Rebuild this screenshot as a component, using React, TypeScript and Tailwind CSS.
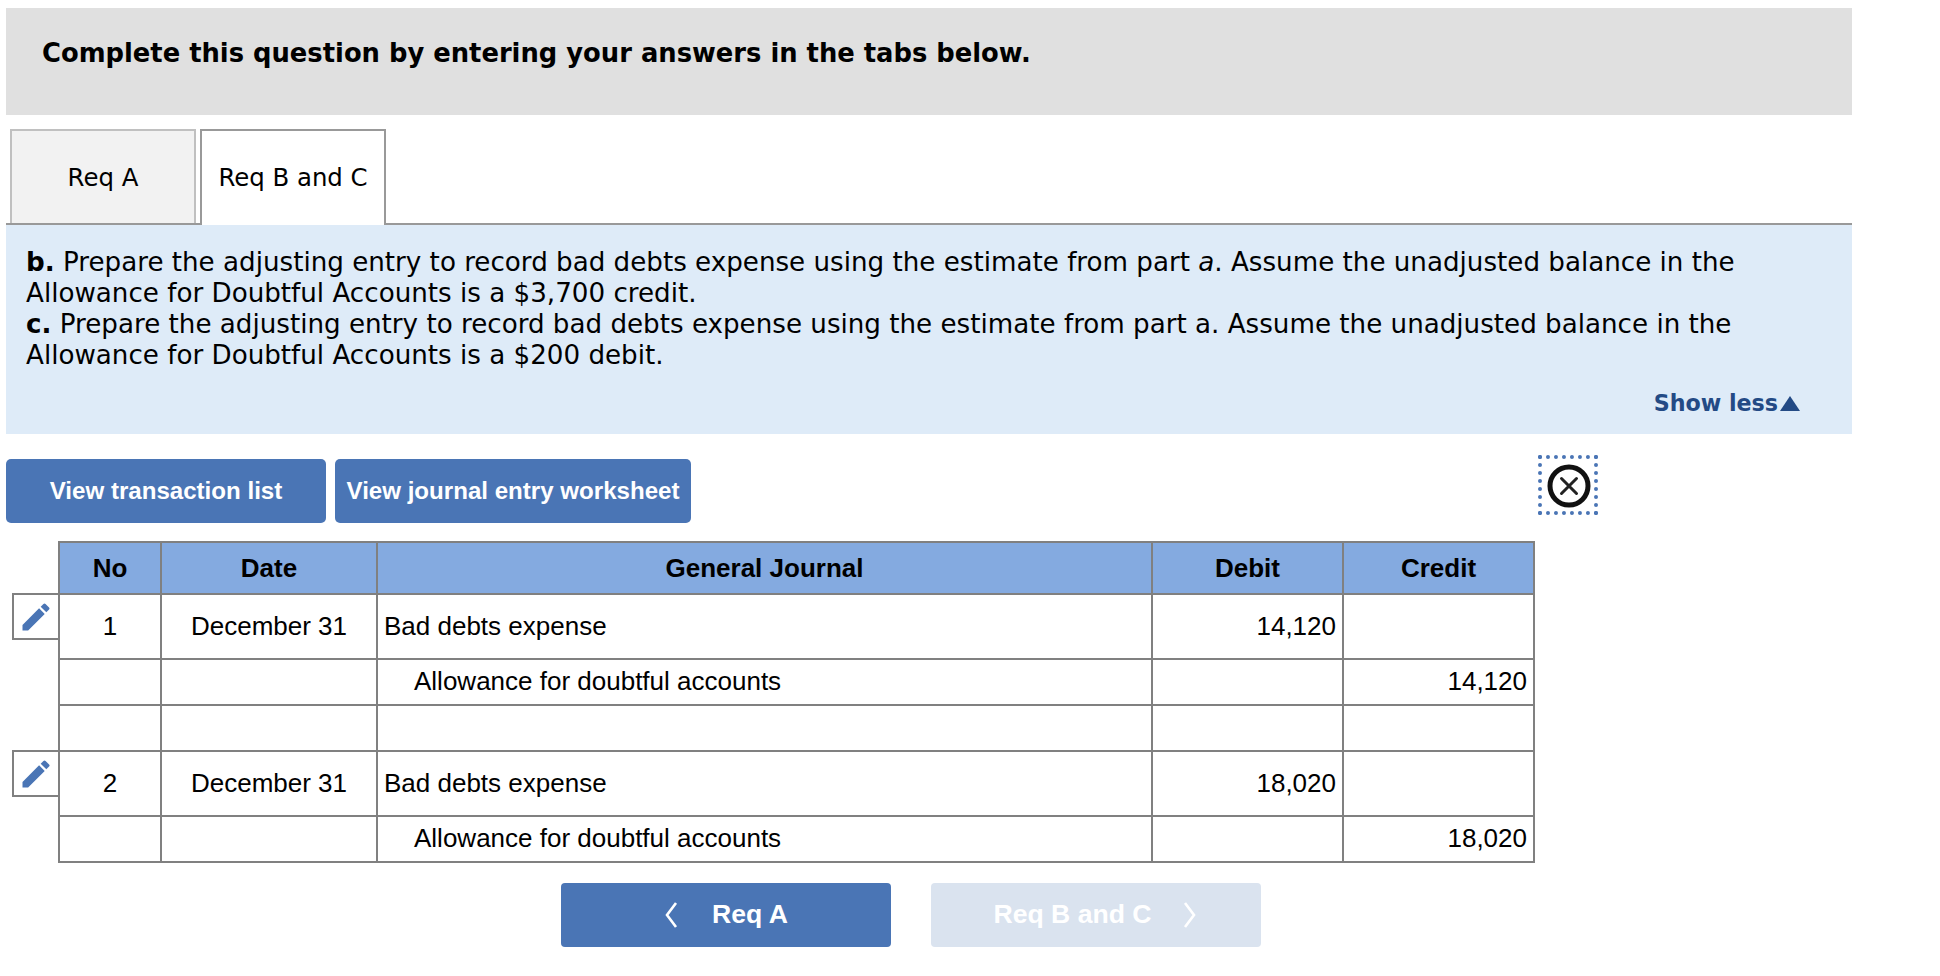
const verdana = "font-['DejaVu_Sans',sans-serif]";
const arial = "font-['Liberation_Sans',Arial,sans-serif]";

const gridCols = "grid grid-cols-[102px_216px_775px_191px_189px] w-[1477px]";

type Row = {
  no?: string;
  date?: string;
  account?: string;
  indent?: boolean;
  debit?: string;
  credit?: string;
  edit?: boolean;
  height: string;
};

const rows: Row[] = [
  { no: "1", date: "December 31", account: "Bad debts expense", debit: "14,120", edit: true, height: "h-[65px]" },
  { account: "Allowance for doubtful accounts", indent: true, credit: "14,120", height: "h-[46px]" },
  { height: "h-[46px]" },
  { no: "2", date: "December 31", account: "Bad debts expense", debit: "18,020", edit: true, height: "h-[65px]" },
  { account: "Allowance for doubtful accounts", indent: true, credit: "18,020", height: "h-[46px]" },
];

function PencilIcon() {
  return (
    <svg viewBox="0 0 24 24" className="h-[36px] w-[36px] fill-[#4a75b5]">
      <path d="M3 17.25V21h3.75L17.81 9.94l-3.75-3.75L3 17.25zM20.71 7.04a1 1 0 0 0 0-1.41l-2.34-2.34a1 1 0 0 0-1.41 0l-1.83 1.83 3.75 3.75 1.83-1.83z" />
    </svg>
  );
}

function CloseIcon() {
  return (
    <svg viewBox="0 0 44 44" className="h-[44px] w-[44px]">
      <circle cx="22" cy="22" r="19" fill="none" stroke="#111" strokeWidth="5" />
      <path d="M14.5 14.5l15 15M29.5 14.5l-15 15" stroke="#222" strokeWidth="3" strokeLinecap="round" />
    </svg>
  );
}

function JournalRow({ row }: { row: Row }) {
  return (
    <div className="flex">
      <div className="w-[58px] shrink-0">
        {row.edit && (
          <div className="ml-[12px] -mt-[2px] flex h-[47px] w-[46px] items-center justify-center border-2 border-r-0 border-[#808080] bg-white">
            <PencilIcon />
          </div>
        )}
      </div>
      <div className={`${gridCols} ${row.height} border-x-2 border-b-2 border-[#808080] text-[26px] text-black`}>
        <div className="flex items-center justify-center border-r-2 border-[#808080]">{row.no}</div>
        <div className="flex items-center justify-center border-r-2 border-[#808080]">{row.date}</div>
        <div className={`flex items-center border-r-2 border-[#808080] ${row.indent ? "pb-[2px] pl-[36px]" : "pl-[6px]"}`}>{row.account}</div>
        <div className={`flex items-center justify-end border-r-2 border-[#808080] pr-[6px] ${row.indent ? "pb-[2px]" : ""}`}>{row.debit}</div>
        <div className={`flex items-center justify-end pr-[6px] ${row.indent ? "pb-[2px]" : ""}`}>{row.credit}</div>
      </div>
    </div>
  );
}

export default function App() {
  return (
    <div className={`min-h-[976px] bg-white pt-[8px] text-black ${verdana}`}>
      <div className="ml-[6px] h-[107px] w-[1846px] bg-[#e0e0e0] pl-[36px] pt-[29px] text-[25.8px] leading-[32px] font-bold">
        Complete this question by entering your answers in the tabs below.
      </div>

      <div className="mt-[14px] ml-[6px] flex h-[96px] w-[1846px] items-end gap-[4px] border-b-2 border-[#999] pl-[4px]">
        <div className="flex h-[94px] w-[186px] items-center justify-center border-2 border-b-0 border-[#c0c0c0] bg-[#f2f2f2] pt-[3px] text-[24.4px]">
          Req A
        </div>
        <div className="-mb-[2px] flex h-[96px] w-[186px] items-center justify-center border-2 border-b-0 border-[#999] bg-white pb-[1px] pt-[2px] text-[24.4px]">
          Req B and C
        </div>
      </div>

      <div className="ml-[6px] h-[209px] w-[1846px] bg-[#deebf8] pt-[22px] pl-[20px] pr-[30px] text-[26.17px] leading-[31px]">
        <p><b>b.</b> Prepare the adjusting entry to record bad debts expense using the estimate from part <i>a</i>. Assume the unadjusted balance in the</p>
        <p>Allowance for Doubtful Accounts is a $3,700 credit.</p>
        <p><b>c.</b> Prepare the adjusting entry to record bad debts expense using the estimate from part a. Assume the unadjusted balance in the</p>
        <p>Allowance for Doubtful Accounts is a $200 debit.</p>
        <div className="mt-[17px] flex items-center justify-end gap-[2px] pr-[22px] text-[22.2px] leading-[30px] font-bold text-[#234a85]">
          Show less
          <span className="h-0 w-0 border-x-[10px] border-b-[15px] border-x-transparent border-b-[#234a85]" />
        </div>
      </div>

      <div className={`mt-[25px] ml-[6px] flex w-[1592px] items-start justify-between ${arial}`}>
        <div className="flex gap-[9px]">
          <button className="h-[64px] w-[320px] rounded-[5px] bg-[#4a75b5] text-[24.1px] font-bold text-white">View transaction list</button>
          <button className="h-[64px] w-[356px] rounded-[5px] bg-[#4a75b5] text-[24.1px] font-bold text-white">View journal entry worksheet</button>
        </div>
        <div className="-mt-[4px] mb-[4px] flex h-[60px] w-[60px] items-center justify-center border-4 border-dotted border-[#4a75b5] pt-[2px] pl-[1px]">
          <CloseIcon />
        </div>
      </div>

      <div className={`mt-[18px] ${arial}`}>
        <div className="ml-[58px]">
          <div className={`${gridCols} h-[54px] border-2 border-[#808080] bg-[#84aae0] text-[26px] font-bold`}>
            <div className="flex items-center justify-center border-r-2 border-[#808080]">No</div>
            <div className="flex items-center justify-center border-r-2 border-[#808080]">Date</div>
            <div className="flex items-center justify-center border-r-2 border-[#808080]">General Journal</div>
            <div className="flex items-center justify-center border-r-2 border-[#808080]">Debit</div>
            <div className="flex items-center justify-center">Credit</div>
          </div>
        </div>
        {rows.map((row, i) => (
          <JournalRow key={i} row={row} />
        ))}
      </div>

      <div className={`mt-[20px] ml-[561px] flex gap-[40px] text-[26.6px] font-bold text-white ${arial}`}>
        <button className="flex h-[64px] w-[330px] items-center justify-center gap-[34px] rounded-[4px] bg-[#4a75b5]">
          <svg viewBox="0 0 14 28" className="h-[28px] w-[14px] fill-none stroke-white stroke-[2.6]"><path d="M12 2L3 14l9 12" /></svg>
          Req A
        </button>
        <button className="flex h-[64px] w-[330px] items-center justify-center gap-[31px] rounded-[4px] bg-[#dae3ef] pr-[2px]">
          Req B and C
          <svg viewBox="0 0 14 28" className="h-[28px] w-[14px] fill-none stroke-white stroke-[2.6]"><path d="M2 2l9 12-9 12" /></svg>
        </button>
      </div>
    </div>
  );
}
